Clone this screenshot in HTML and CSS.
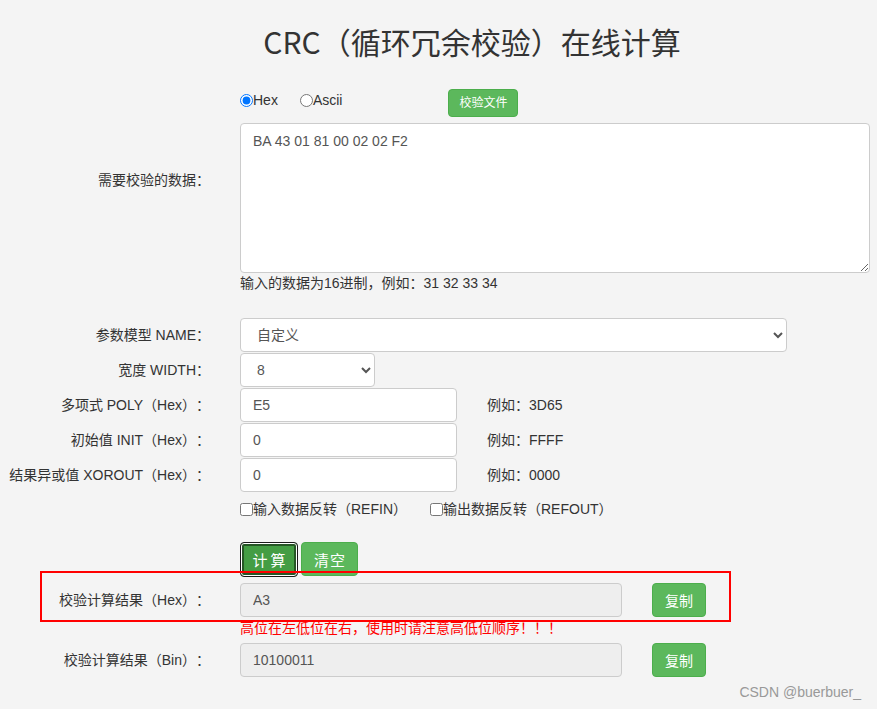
FILE: index.html
```html
<!DOCTYPE html>
<html lang="zh-CN">
<head>
<meta charset="utf-8">
<title>CRC在线计算</title>
<link rel="stylesheet" href="styles.css">
</head>
<body>
<h1 class="title">CRC（循环冗余校验）在线计算</h1>

<div class="row data-row">
  <label class="lbl lbl-data">需要校验的数据：</label>
  <div class="ctl">
    <div class="mode">
      <label class="opt"><input type="radio" name="mode" checked>Hex</label>
      <label class="opt"><input type="radio" name="mode">Ascii</label>
      <button class="btn btn-file">校验文件</button>
    </div>
    <textarea class="area">BA 43 01 81 00 02 02 F2</textarea>
    <p class="hint">输入的数据为16进制，例如：31 32 33 34</p>
  </div>
</div>

<div class="params">
  <div class="row">
    <label class="lbl">参数模型 NAME：</label>
    <select class="field sel-name"><option>自定义</option></select>
  </div>
  <div class="row">
    <label class="lbl">宽度 WIDTH：</label>
    <select class="field sel-width"><option>8</option></select>
  </div>
  <div class="row">
    <label class="lbl">多项式 POLY（Hex）：</label>
    <input class="field inp" value="E5">
    <span class="example">例如：3D65</span>
  </div>
  <div class="row">
    <label class="lbl">初始值 INIT（Hex）：</label>
    <input class="field inp" value="0">
    <span class="example">例如：FFFF</span>
  </div>
  <div class="row">
    <label class="lbl">结果异或值 XOROUT（Hex）：</label>
    <input class="field inp" value="0">
    <span class="example">例如：0000</span>
  </div>
</div>

<div class="checks">
  <label class="chk"><input type="checkbox">输入数据反转（REFIN）</label>
  <label class="chk"><input type="checkbox">输出数据反转（REFOUT）</label>
</div>

<div class="actions">
  <button class="btn btn-calc">计算</button>
  <button class="btn btn-clear">清空</button>
</div>

<div class="row result-row">
  <label class="lbl">校验计算结果（Hex）：</label>
  <input class="field out" value="A3" readonly>
  <button class="btn btn-copy">复制</button>
</div>
<p class="warn">高位在左低位在右，使用时请注意高低位顺序！！！</p>
<div class="row result-row bin-row">
  <label class="lbl">校验计算结果（Bin）：</label>
  <input class="field out" value="10100011" readonly>
  <button class="btn btn-copy">复制</button>
</div>

<div class="highlight"></div>
<div class="watermark">CSDN @buerbuer_</div>
</body>
</html>
```

FILE: styles.css
```css
html, body {
  margin: 0;
  padding: 0;
  background: #f4f4f4;
}
body {
  font-family: "Liberation Sans", "Noto Sans CJK SC", sans-serif;
  font-size: 14px;
  line-height: 20px;
  color: #333;
  width: 877px;
  height: 709px;
  overflow: hidden;
  text-spacing-trim: space-all;
}
.title {
  margin: 25px 0 31px;
  padding-left: 67px;
  text-align: center;
  font-family: "Noto Sans CJK SC", sans-serif;
  font-weight: normal;
  font-size: 30px;
  line-height: 33px;
  color: #333;
}
.row {
  display: flex;
  align-items: center;
  margin-bottom: 1px;
}
.lbl {
  flex: none;
  width: 210px;
  margin-right: 30px;
  text-align: right;
  white-space: nowrap;
}
.data-row {
  align-items: flex-start;
  margin-bottom: 0;
}
.lbl-data {
  padding-top: 81px;
}
.ctl {
  flex: none;
}
.mode {
  display: flex;
  align-items: flex-start;
  height: 28px;
}
.opt {
  display: flex;
  align-items: center;
  margin-top: 1px;
  margin-right: 22px;
  line-height: 20px;
}
.opt input,
.chk input {
  margin: 0;
  width: 13px;
  height: 13px;
}
.btn {
  font-family: "Liberation Sans", "Noto Sans CJK SC", sans-serif;
  color: #fff;
  background: #5cb85c;
  border: 1px solid #4cae4c;
  border-radius: 4px;
  cursor: pointer;
}
.btn-file {
  margin-left: 84px;
  width: 70px;
  height: 28px;
  padding: 0;
  font-size: 12px;
  line-height: 18px;
}
.area {
  display: block;
  box-sizing: border-box;
  margin-top: 6px;
  width: 630px;
  height: 150px;
  padding: 7px 12px;
  border: 1px solid #ccc;
  border-radius: 4px;
  background: #fff;
  color: #555;
  font-family: "Liberation Sans", "Noto Sans CJK SC", sans-serif;
  font-size: 14px;
  line-height: 20px;
  resize: vertical;
}
.hint {
  margin: 0;
  line-height: 20px;
}
.params {
  margin-top: 25px;
}
.field {
  box-sizing: border-box;
  height: 34px;
  padding: 6px 12px;
  border: 1px solid #ccc;
  border-radius: 4px;
  background: #fff;
  color: #555;
  font-family: "Liberation Sans", "Noto Sans CJK SC", sans-serif;
  font-size: 14px;
}
.sel-name {
  width: 547px;
}
.sel-width {
  width: 135px;
}
.inp {
  width: 217px;
}
.example {
  margin-left: 30px;
}
.checks {
  display: flex;
  margin: 7px 0 0 240px;
}
.chk {
  display: flex;
  align-items: center;
  margin-right: 23px;
  line-height: 20px;
}
.actions {
  display: flex;
  align-items: flex-start;
  margin: 23px 0 0 240px;
}
.btn-calc {
  width: 58px;
  height: 35px;
  padding: 0 0 0 3px;
  margin-right: 3px;
  font-size: 15px;
  letter-spacing: 3px;
  background: #449d44;
  border: 1px solid #1b1b1b;
  box-shadow: inset 0 0 0 1px #fff, inset 0 0 0 3px #255625;
}
.btn-clear {
  width: 57px;
  height: 34px;
  padding: 0 0 0 1px;
  font-size: 15px;
  letter-spacing: 1px;
}
.result-row {
  margin-top: 6px;
}
.out {
  width: 382px;
  background: #eee;
}
.btn-copy {
  margin-left: 30px;
  width: 54px;
  height: 34px;
  padding: 0;
  font-size: 14px;
}
.warn {
  margin: 1px 0 0 240px;
  color: #ff0000;
  line-height: 20px;
}
.bin-row {
  margin-top: 5px;
}
.highlight {
  position: absolute;
  left: 40px;
  top: 571px;
  width: 687px;
  height: 47px;
  border: 2px solid #f00;
  pointer-events: none;
}
.watermark {
  position: absolute;
  right: 16px;
  top: 683px;
  font-size: 14px;
  line-height: 18px;
  color: #999;
}
```
